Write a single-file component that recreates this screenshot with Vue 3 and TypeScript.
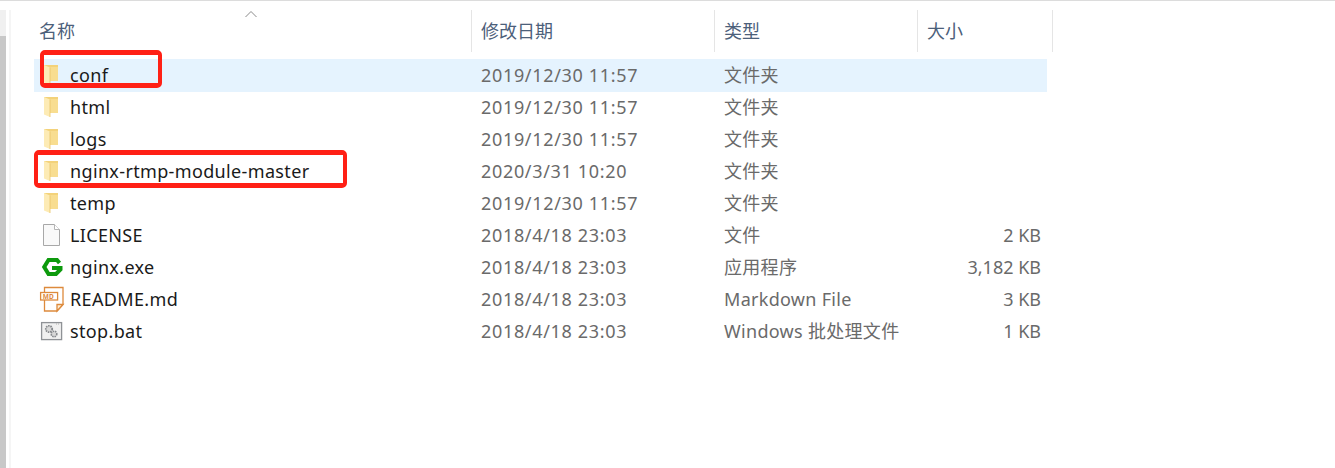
<script setup lang="ts">
interface Row { name: string; date: string; type: string; size: string; icon: string }
const rows: Row[] = [
  { name: 'conf', date: '2019/12/30 11:57', type: '文件夹', size: '', icon: 'folder' },
  { name: 'html', date: '2019/12/30 11:57', type: '文件夹', size: '', icon: 'folder' },
  { name: 'logs', date: '2019/12/30 11:57', type: '文件夹', size: '', icon: 'folder' },
  { name: 'nginx-rtmp-module-master', date: '2020/3/31 10:20', type: '文件夹', size: '', icon: 'folder' },
  { name: 'temp', date: '2019/12/30 11:57', type: '文件夹', size: '', icon: 'folder' },
  { name: 'LICENSE', date: '2018/4/18 23:03', type: '文件', size: '2 KB', icon: 'file' },
  { name: 'nginx.exe', date: '2018/4/18 23:03', type: '应用程序', size: '3,182 KB', icon: 'exe' },
  { name: 'README.md', date: '2018/4/18 23:03', type: 'Markdown File', size: '3 KB', icon: 'md' },
  { name: 'stop.bat', date: '2018/4/18 23:03', type: 'Windows 批处理文件', size: '1 KB', icon: 'bat' },
]
</script>

<template>
  <div class="page">
    <div class="rail"><div class="thumb"></div></div>
    <div class="main">
      <div class="head">
        <div class="hcell first">名称</div>
        <div class="hcell">修改日期</div>
        <div class="hcell">类型</div>
        <div class="hcell last">大小</div>
        <svg class="sort" width="14" height="8" viewBox="0 0 14 8"><path d="M1.500 7 7 1.500 12.500 7" fill="none" stroke="#8a8a8a" stroke-width="1"/></svg>
      </div>
      <div class="list">
        <div v-for="(r, i) in rows" :key="r.name" class="row" :class="{ sel: i === 0 }">
          <div class="name">
            <svg class="icon" width="20" height="22" viewBox="0 0 20 22">
              <template v-if="r.icon === 'folder'">
                <path d="M3 1h14v16H3z" fill="#f3d27a"/>
                <path d="M9 3h8v14H9z" fill="#f8dd90"/>
                <path d="M3 1l6 2.500V21l-6-2.500z" fill="#fdebb5"/>
                <path d="M9 3.500V21" stroke="#e8c468" stroke-width=".8"/>
              </template>
              <template v-else-if="r.icon === 'file'">
                <path d="M2.500 .5h11l5 5v16h-16z" fill="#f9f9f9" stroke="#a8a8a8"/>
                <path d="M13.500 .5v5h5" fill="#fff" stroke="#b5b5b5"/>
              </template>
              <template v-else-if="r.icon === 'exe'">
                <path d="M18.500 7 16 4H7.500L3.200 11l4.300 7H15l4.500-4.500V12H11" fill="none" stroke="#0d9a0d" stroke-width="4"/>
              </template>
              <template v-else-if="r.icon === 'md'">
                <path d="M3.500 -.5h18.500v17l-6 6.500H3.500z" fill="#fff" stroke="#dd8a3c" stroke-width="1.300"/>
                <path d="M16 23v-6.500h6z" fill="#fdeed6" stroke="#dd8a3c" stroke-width="1.300"/>
                <rect x="-.4" y="4.500" width="17" height="7.500" fill="#fff" stroke="#dd8a3c" stroke-width="1.300"/>
                <text x="1.800" y="10.700" class="mdtext">MD</text>
              </template>
              <template v-else>
                <rect x=".6" y="2.600" width="20" height="17" fill="#f0f0f0" stroke="#8f9296" stroke-width="1.300"/>
                <path d="M15 4h4" stroke="#b0b0b0" stroke-width="1.200" stroke-dasharray="1 1"/>
                <circle cx="8" cy="9" r="3.200" fill="#d8d8d8" stroke="#85888c" stroke-width="1.800" stroke-dasharray="1.500 .8"/>
                <circle cx="13" cy="14" r="2.800" fill="#d8d8d8" stroke="#85888c" stroke-width="1.600" stroke-dasharray="1.500 .8"/>
              </template>
            </svg>
            <span>{{ r.name }}</span>
          </div>
          <div class="cell date">{{ r.date }}</div>
          <div class="cell type">{{ r.type }}</div>
          <div class="cell size">{{ r.size }}</div>
        </div>
      </div>
      <div class="mark m1"></div>
      <div class="mark m2"></div>
    </div>
  </div>
</template>

<style scoped>
.page {
  width: 1335px;
  height: 468px;
  box-sizing: border-box;
  border-top: 1px solid #dcdcdc;
  background: #fff;
  display: flex;
  overflow: hidden;
  font-family: "Noto Sans", "Noto Sans CJK SC", sans-serif;
  font-size: 18px;
}
.rail {
  width: 6px;
  margin-top: 9px;
  background: #f0f0f0;
  display: flex;
  flex-direction: column;
  padding-top: 26px;
}
.thumb { flex: 1; background: #c8c8c8; }
.main {
  position: relative;
  margin-left: 3px;
  border-left: 2px solid #f5f5f5;
  margin-top: 9px;
  flex: 1;
  padding-left: 23px;
}
.head {
  position: relative;
  display: grid;
  grid-template-columns: 438px 243px 203px 135px;
  height: 40px;
  margin-bottom: 9px;
  width: 1019px;
}
.hcell {
  border-right: 1px solid #e5e5e5;
  padding-left: 9px;
  line-height: 42px;
  color: #4c607a;
  font-size: 18px;
}
.hcell.first { padding-left: 5px; }
.sort { position: absolute; left: 210px; top: 0px; }
.row {
  display: grid;
  grid-template-columns: 437px 243px 203px 130px;
  width: 1013px;
  height: 32px;
  line-height: 32px;
  align-items: center;
}
.row.sel { background: #e5f3fe; height: 33px; margin-bottom: -1px; padding-bottom: 1px; box-sizing: border-box; }
.name { display: flex; align-items: center; color: #1a1a1a; padding-left: 7px; letter-spacing: .35px; }
.icon { width: 20px; height: 22px; margin-right: 9px; flex: none; overflow: visible; }
.mdtext { font-size: 6.500px; font-weight: 700; fill: #dd8a3c; letter-spacing: 0; }
.cell { padding-left: 10px; color: #6a6a6a; white-space: nowrap; }
.date { letter-spacing: .67px; }
.type { letter-spacing: .3px; }
.size { text-align: right; padding-right: 6px; padding-left: 0; }
.mark {
  position: absolute;
  border-style: solid;
  border-color: #ff2015;
  border-width: 5px 4px;
  border-radius: 5px;
  box-sizing: border-box;
}
.m1 { left: 29px; top: 40px; width: 122px; height: 38px; }
.m2 { left: 23px; top: 140px; width: 313px; height: 38px; }
</style>
